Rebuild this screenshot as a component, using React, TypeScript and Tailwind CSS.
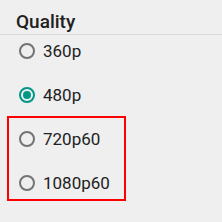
const options = ["360p", "480p", "720p60", "1080p60"];

function Radio({ checked }: { checked: boolean }) {
  return (
    <span
      className={`flex h-[16px] w-[16px] shrink-0 items-center justify-center rounded-full border-2 ${
        checked ? "border-[#009688]" : "border-[#737373]"
      }`}
    >
      {checked && <span className="h-[8px] w-[8px] rounded-full bg-[#009688]" />}
    </span>
  );
}

export default function App() {
  const selected = "480p";

  return (
    <div
      className="relative h-[222px] w-[222px] overflow-hidden bg-[#efefef] text-[#212121]"
      style={{ fontFamily: "Roboto, 'Noto Sans', sans-serif" }}
    >
      {/* header */}
      <div className="h-[34px] pt-[10px] pl-[16px] text-[19px] leading-[24px] font-medium">
        Quality
      </div>
      <div className="h-px w-full bg-[#d9d9d9]" />

      {/* options */}
      <div className="flex flex-col gap-[12px] pl-[19px]">
        {options.map((opt) => (
          <div key={opt} className="flex h-[32px] items-center gap-[8px]">
            <Radio checked={opt === selected} />
            <span className="text-[17px] leading-[24px]">{opt}</span>
          </div>
        ))}
      </div>

      {/* annotation box */}
      <div className="pointer-events-none absolute top-[116px] left-[7px] h-[85px] w-[119px] border-2 border-[#ff0000]" />
    </div>
  );
}
